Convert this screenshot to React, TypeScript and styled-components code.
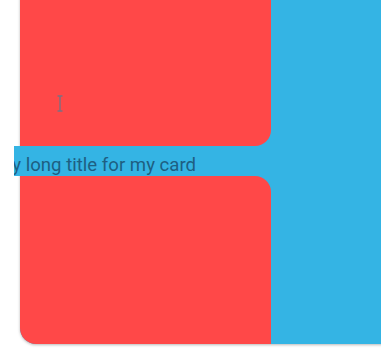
import React from "react";
import styled, { createGlobalStyle } from "styled-components";

const Global = createGlobalStyle`
  html, body { margin: 0; padding: 0; background: #ffffff; }
  body { font-family: Roboto, "Noto Sans", sans-serif; }
`;

const Page = styled.div`
  width: 381px;
  height: 357px;
  overflow: hidden;
  padding-left: 20px;
  box-sizing: border-box;
  background: #ffffff;
`;

const Card = styled.div`
  margin-top: -20px;
  width: 420px;
  display: grid;
  grid-template-columns: 251px 1fr;
  background: #34b4e4;
  border-radius: 16px;
  box-shadow: 0 1px 3px rgba(0, 0, 0, 0.28);
`;

const Column = styled.div`
  display: flex;
  flex-direction: column;
`;

const Block = styled.div<{ $top?: boolean }>`
  position: relative;
  background: #ff4848;
  height: ${(p) => (p.$top ? "166px" : "168px")};
  border-radius: ${(p) => (p.$top ? "16px 0 16px 0" : "0 16px 0 16px")};
`;

const TitleRow = styled.div`
  margin-left: -6px;
  height: 30px;
  box-sizing: border-box;
  padding-top: 8px;
  background: #34b4e4;
  overflow: hidden;
  display: flex;
  align-items: center;
  justify-content: flex-end;
  padding-right: 75px;
  white-space: nowrap;
  font-size: 18.6px;
  color: #1e5f82;
`;

const Cursor = styled.svg`
  position: absolute;
  left: 37px;
  top: 115px;
`;

export default function App() {
  return (
    <>
      <Global />
      <Page>
        <Card>
          <Column>
            <Block $top>
              <Cursor width="6" height="17" viewBox="0 0 6 17">
                <path d="M0.5 1 H5.5 M3 1 V16 M0.5 16 H5.5" stroke="#7d6f80" strokeWidth="1.4" fill="none" />
              </Cursor>
            </Block>
            <TitleRow>My really long title for my card</TitleRow>
            <Block />
          </Column>
          <div />
        </Card>
      </Page>
    </>
  );
}
